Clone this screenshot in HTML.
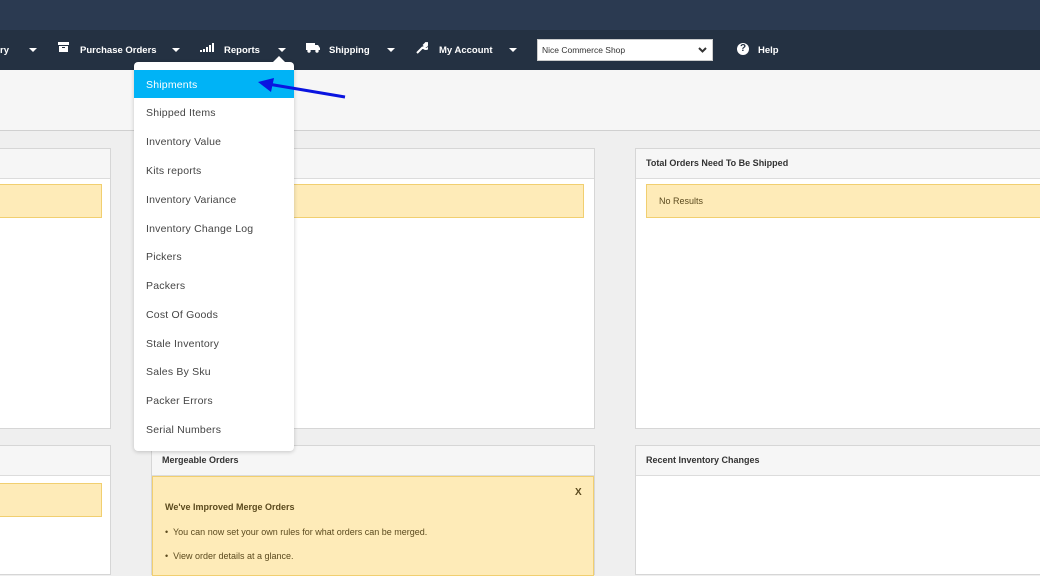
<!DOCTYPE html>
<html><head><style>
body{margin:0;width:1040px;height:564px;overflow:hidden;background:#efefef;font-family:"Liberation Sans",sans-serif;position:relative}
.a{position:absolute}
.top{left:0;top:0;width:1040px;height:30px;background:#2b3a51}
.nav{left:0;top:30px;width:1040px;height:40px;background:#243142;color:#fff;font-size:9.5px;font-weight:bold}
.nav span{position:absolute;top:15px}
.car{position:absolute;top:18px;width:0;height:0;border-left:4px solid transparent;border-right:4px solid transparent;border-top:4px solid #fff}
.hdr{left:0;top:70px;width:1040px;height:60px;background:#f6f6f6;border-bottom:1px solid #d0d0d0}
.p{background:#fff;border:1px solid #d6d6d6;box-sizing:border-box}
.ph{height:30px;background:#f6f6f6;border-bottom:1px solid #dcdcdc;font-size:9px;font-weight:bold;color:#333;line-height:29px;padding-left:10px;box-sizing:border-box}
.y{background:#feebb8;border:1px solid #f1cf70;box-sizing:border-box;font-size:9px;color:#5b4a1e}
.dd{left:134px;top:62px;width:160px;height:389px;background:#fff;border-radius:4px;box-shadow:0 1px 4px rgba(0,0,0,.2)}
.dd div{position:absolute;left:12px;font-size:10.5px;color:#444;letter-spacing:.2px}
</style></head><body>
<div class="a top"></div>
<div class="a nav">
<span style="left:0">ry</span><div class="car" style="left:29px"></div>
<svg class="a" style="left:58px;top:12px" width="11" height="10"><rect x="0" y="0" width="11" height="3" fill="#fff"/><rect x="1" y="4" width="9" height="6" fill="#fff"/><rect x="4" y="5" width="3" height="1" fill="#243142"/></svg>
<span style="left:80px">Purchase Orders</span><div class="car" style="left:172px"></div>
<svg class="a" style="left:200px;top:13px" width="14" height="9"><rect x="0" y="7" width="2" height="2" fill="#fff"/><rect x="3" y="6" width="2" height="3" fill="#fff"/><rect x="6" y="4" width="2" height="5" fill="#fff"/><rect x="9" y="2" width="2" height="7" fill="#fff"/><rect x="12" y="0" width="2" height="9" fill="#fff"/></svg>
<span style="left:224px">Reports</span><div class="car" style="left:278px"></div>
<svg class="a" style="left:306px;top:13px" width="14" height="10"><rect x="0" y="0" width="9" height="7" fill="#fff"/><path d="M9 2h3l2 3v2H9z" fill="#fff"/><circle cx="3" cy="8" r="1.7" fill="#fff"/><circle cx="11" cy="8" r="1.7" fill="#fff"/></svg>
<span style="left:329px">Shipping</span><div class="car" style="left:387px"></div>
<svg class="a" style="left:416px;top:12px" width="12" height="12"><path d="M1 11L7 5M7 5a3 3 0 1 0 3-4l-2 2 1 1 2-2a3 3 0 0 1-4 3" stroke="#fff" stroke-width="2" fill="none"/></svg>
<span style="left:439px">My Account</span><div class="car" style="left:509px"></div>
<div class="a" style="left:537px;top:9px;width:176px;height:22px;background:#fff;border:1px solid #ccc;box-sizing:border-box;color:#333;font-weight:normal;font-size:8.5px;line-height:20px;padding-left:4px">Nice Commerce Shop<svg class="a" style="right:5px;top:7px" width="9" height="6"><path d="M1 1l3.5 3.5L8 1" stroke="#333" stroke-width="2" fill="none"/></svg></div>
<div class="a" style="left:737px;top:13px;width:12px;height:12px;border-radius:50%;background:#fff;color:#243142;font-size:10px;text-align:center;line-height:12px">?</div>
<span style="left:758px">Help</span>
</div>
<div class="a hdr"></div>

<div class="a p" style="left:-2px;top:148px;width:113px;height:281px"><div class="ph"></div><div class="a y" style="left:0;top:35px;width:103px;height:34px"></div></div>
<div class="a p" style="left:151px;top:148px;width:444px;height:281px"><div class="ph"></div><div class="a y" style="left:132px;top:35px;width:300px;height:34px"></div></div>
<div class="a p" style="left:635px;top:148px;width:410px;height:281px"><div class="ph">Total Orders Need To Be Shipped</div><div class="a y" style="left:10px;top:35px;width:400px;height:34px;line-height:32px;padding-left:12px">No Results</div></div>

<div class="a p" style="left:-2px;top:445px;width:113px;height:130px"><div class="ph"></div><div class="a y" style="left:0;top:37px;width:103px;height:34px"></div></div>
<div class="a p" style="left:151px;top:445px;width:444px;height:130px"><div class="ph">Mergeable Orders</div>
<div class="a y" style="left:0;top:30px;width:442px;height:100px">
<div class="a" style="left:422px;top:10px;font-weight:bold;font-size:10px">X</div>
<div class="a" style="left:12px;top:25px;font-weight:bold">We've Improved Merge Orders</div>
<div class="a" style="left:12px;top:50px">•&nbsp; You can now set your own rules for what orders can be merged.</div>
<div class="a" style="left:12px;top:74px">•&nbsp; View order details at a glance.</div>
</div></div>
<div class="a p" style="left:635px;top:445px;width:410px;height:130px"><div class="ph">Recent Inventory Changes</div></div>

<div class="a dd">
<div style="left:0;top:8px;width:160px;height:28px;background:#00b3f6"></div>
<div style="top:17px;color:#fff">Shipments</div>
<div style="top:45px">Shipped Items</div>
<div style="top:74px">Inventory Value</div>
<div style="top:103px">Kits reports</div>
<div style="top:132px">Inventory Variance</div>
<div style="top:161px">Inventory Change Log</div>
<div style="top:189px">Pickers</div>
<div style="top:218px">Packers</div>
<div style="top:247px">Cost Of Goods</div>
<div style="top:276px">Stale Inventory</div>
<div style="top:304px">Sales By Sku</div>
<div style="top:333px">Packer Errors</div>
<div style="top:362px">Serial Numbers</div>
</div>
<div class="a" style="left:272px;top:56px;width:0;height:0;border-left:7px solid transparent;border-right:7px solid transparent;border-bottom:7px solid #fff"></div>
<svg class="a" style="left:250px;top:75px" width="100" height="30"><path d="M95 22L18 9" stroke="#0a14e0" stroke-width="3"/><path d="M8 7L24 3L21 17Z" fill="#0a14e0"/></svg>
</body></html>
